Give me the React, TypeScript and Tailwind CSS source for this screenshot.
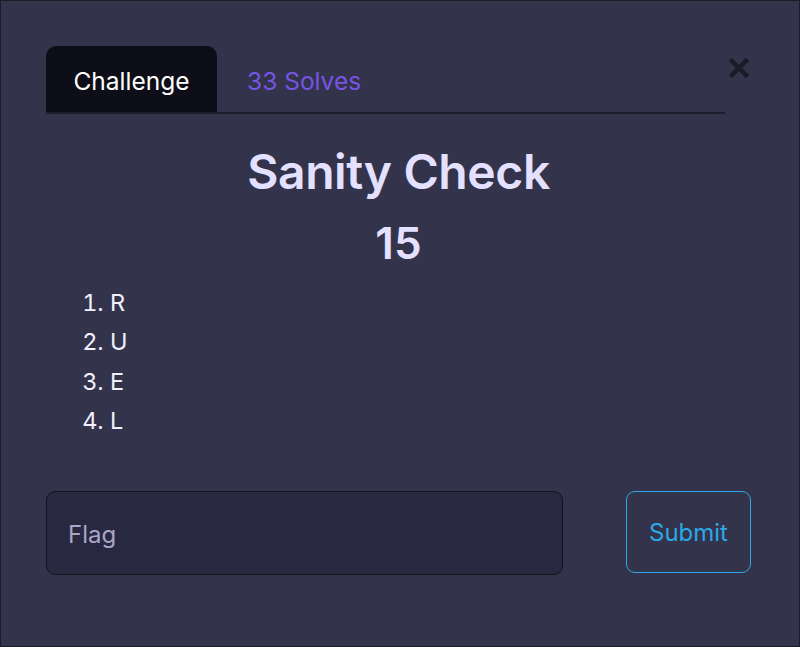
import { useState } from "react";

export default function App() {
  const [flag, setFlag] = useState("");

  return (
    <main
      className="h-[647px] w-[800px] border border-[#1c1c28] bg-[#33334b] text-[#e4e0ff]"
      style={{ fontFamily: "Inter, 'Noto Sans', sans-serif" }}
    >
      <div className="flex flex-col pl-[45px] pr-[48px] pt-[45px]">
        {/* ── Header: tabs + close ─────────────────────────── */}
        <div className="flex items-start">
          <div className="flex w-[679px] items-end border-b-2 border-[#1d1d2b]">
            <button
              type="button"
              className="flex h-[66px] w-[171px] items-center justify-center rounded-t-[10px] bg-[#0e0e18] pt-[4px] text-[24.5px] text-white"
            >
              Challenge
            </button>
            <button
              type="button"
              className="flex h-[66px] items-center px-[30px] pt-[4px] text-[24.5px] text-[#7755e4]"
            >
              33 Solves
            </button>
          </div>
          <button
            type="button"
            aria-label="Close"
            className="ml-auto mt-[10px] flex h-[24px] w-[24px] items-center justify-center text-[#1a1a28]"
          >
            <svg viewBox="0 0 20 20" className="h-[20px] w-[20px]">
              <path d="M3 3 L17 17 M17 3 L3 17" stroke="currentColor" strokeWidth="4.5" strokeLinecap="square" />
            </svg>
          </button>
        </div>

        {/* ── Title ───────────────────────────────────────── */}
        <h1 className="mt-[28px] text-center text-[48px] font-semibold leading-[60px] tracking-[-0.4px]">Sanity Check</h1>
        <h2 className="mt-[15px] text-center text-[44px] font-semibold leading-[52px]">15</h2>

        <ol className="mt-[14px] list-decimal pl-[64px] text-[23.5px] leading-[39.3px] text-[#f2f0ff]">
          <li>R</li>
          <li>U</li>
          <li>E</li>
          <li>L</li>
        </ol>

        {/* ── Flag form ───────────────────────────────────── */}
        <form className="mt-[51px] flex items-start" onSubmit={(e) => e.preventDefault()}>
          <input
            value={flag}
            onChange={(e) => setFlag(e.target.value)}
            placeholder="Flag"
            className="h-[84px] w-[517px] rounded-[9px] border border-[#14141f] bg-[#282840] px-[21px] pt-[2px] text-[24px] text-white outline-none placeholder:text-[#aaa6c6]"
          />
          <button
            type="submit"
            className="ml-auto h-[82px] w-[125px] rounded-[9px] border border-[#2aa9e6] pt-[2px] text-[24px] text-[#2aa9e6]"
          >
            Submit
          </button>
        </form>
      </div>
    </main>
  );
}
